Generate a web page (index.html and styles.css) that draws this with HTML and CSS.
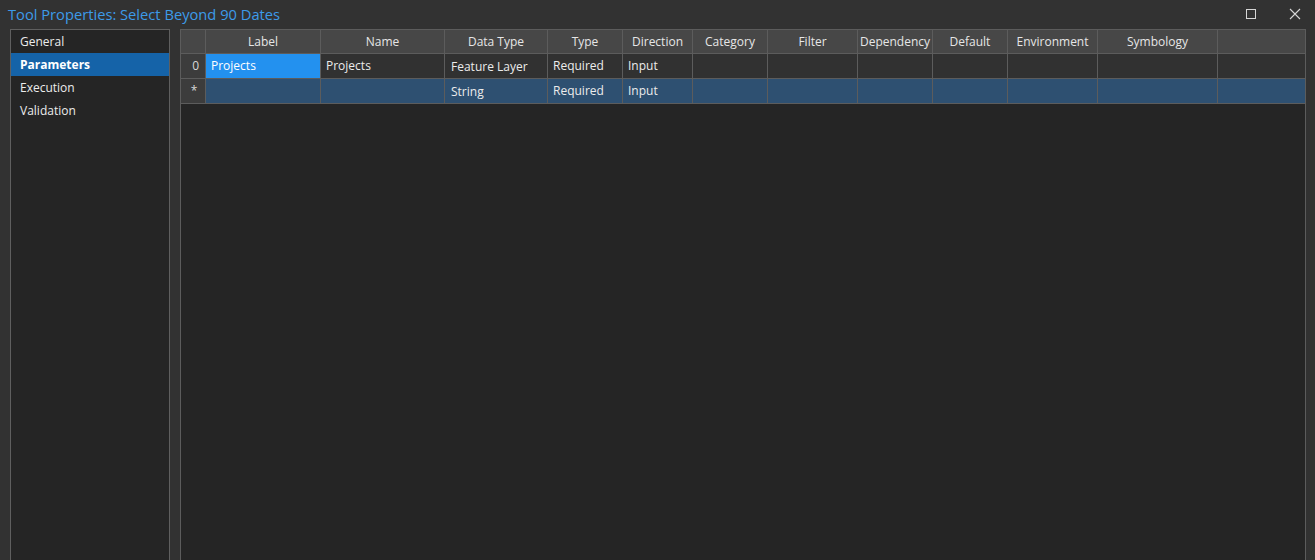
FILE: index.html
```html
<!DOCTYPE html>
<html>
<head>
<meta charset="utf-8">
<link rel="stylesheet" href="styles.css">
</head>
<body>
<div class="window">
  <div class="titlebar">
    <div class="title">Tool Properties: Select Beyond 90 Dates</div>
    <div class="controls">
      <svg class="ctl" width="12" height="12" viewBox="0 0 12 12"><rect x="1.5" y="1.5" width="9" height="9" fill="none" stroke="#d6d6d6" stroke-width="1"/></svg>
      <svg class="ctl" width="12" height="12" viewBox="0 0 12 12"><path d="M1 1 L11 11 M11 1 L1 11" stroke="#d6d6d6" stroke-width="1.1"/></svg>
    </div>
  </div>
  <div class="content">
    <div class="nav">
      <div class="nav-item">General</div>
      <div class="nav-item active">Parameters</div>
      <div class="nav-item">Execution</div>
      <div class="nav-item">Validation</div>
    </div>
    <div class="gridpanel">
      <div class="grid">
        <div class="hc"></div>
        <div class="hc">Label</div>
        <div class="hc">Name</div>
        <div class="hc">Data Type</div>
        <div class="hc">Type</div>
        <div class="hc">Direction</div>
        <div class="hc">Category</div>
        <div class="hc">Filter</div>
        <div class="hc">Dependency</div>
        <div class="hc">Default</div>
        <div class="hc">Environment</div>
        <div class="hc">Symbology</div>
        <div class="hc"></div>

        <div class="rh">0</div>
        <div class="c sel">Projects</div>
        <div class="c">Projects</div>
        <div class="c low">Feature Layer</div>
        <div class="c">Required</div>
        <div class="c">Input</div>
        <div class="c"></div>
        <div class="c"></div>
        <div class="c"></div>
        <div class="c"></div>
        <div class="c"></div>
        <div class="c"></div>
        <div class="c"></div>

        <div class="rh star">*</div>
        <div class="c new"></div>
        <div class="c new"></div>
        <div class="c new low">String</div>
        <div class="c new">Required</div>
        <div class="c new">Input</div>
        <div class="c new"></div>
        <div class="c new"></div>
        <div class="c new"></div>
        <div class="c new"></div>
        <div class="c new"></div>
        <div class="c new"></div>
        <div class="c new"></div>
      </div>
    </div>
  </div>
</div>
</body>
</html>
```

FILE: styles.css
```css
html, body {
  margin: 0;
  padding: 0;
  background: #323232;
  font-family: "Open Sans", "Noto Sans", sans-serif;
  color: #e6e6e6;
}
.window {
  width: 1315px;
  height: 560px;
  display: flex;
  flex-direction: column;
  overflow: hidden;
}
.titlebar {
  height: 29px;
  display: flex;
  align-items: center;
  justify-content: space-between;
  flex: none;
}
.title {
  padding-left: 8px;
  font-size: 14.7px;
  color: #3d9be9;
  margin-top: -1px;
}
.controls {
  display: flex;
  gap: 32px;
  padding-right: 14px;
  margin-top: -1px;
}
.content {
  flex: 1;
  display: flex;
  padding-left: 10px;
  padding-right: 9px;
  gap: 10px;
}
.nav {
  width: 158px;
  border: 1px solid #5f5f5f;
  border-bottom: none;
  background: #252525;
  flex: none;
}
.nav-item {
  height: 23px;
  line-height: 23px;
  padding-left: 9px;
  font-size: 12px;
  color: #ececec;
}
.nav-item.active {
  background: #1563a8;
  color: #ffffff;
  font-weight: bold;
}
.gridpanel {
  flex: 1;
  border: 1px solid #5c5c5c;
  border-bottom: none;
  background: #252525;
}
.grid {
  display: grid;
  grid-template-columns: 24px 114px 123px 102px 74px 69px 74px 89px 74px 74px 89px 119px 1fr;
  grid-template-rows: 23px 24px 24px;
  gap: 1px;
  background: #5c5c5c;
  border-bottom: 1px solid #5c5c5c;
  font-size: 12px;
}
.hc {
  background: #474747;
  text-align: center;
  line-height: 23px;
  color: #e6e6e6;
}
.rh {
  background: #3c3c3c;
  text-align: right;
  padding-right: 6px;
  line-height: 24px;
  color: #d8d8d8;
}
.rh.star {
  text-align: center;
  padding-right: 0;
  padding-left: 2px;
}
.c {
  background: #313131;
  line-height: 24px;
  padding-left: 5px;
  white-space: nowrap;
  overflow: hidden;
  color: #ececec;
}
.c.low {
  padding-left: 6px;
  line-height: 26px;
}
.c.sel {
  background: #2391ef;
  color: #ffffff;
}
.c.new {
  background: #2e5071;
}
```
